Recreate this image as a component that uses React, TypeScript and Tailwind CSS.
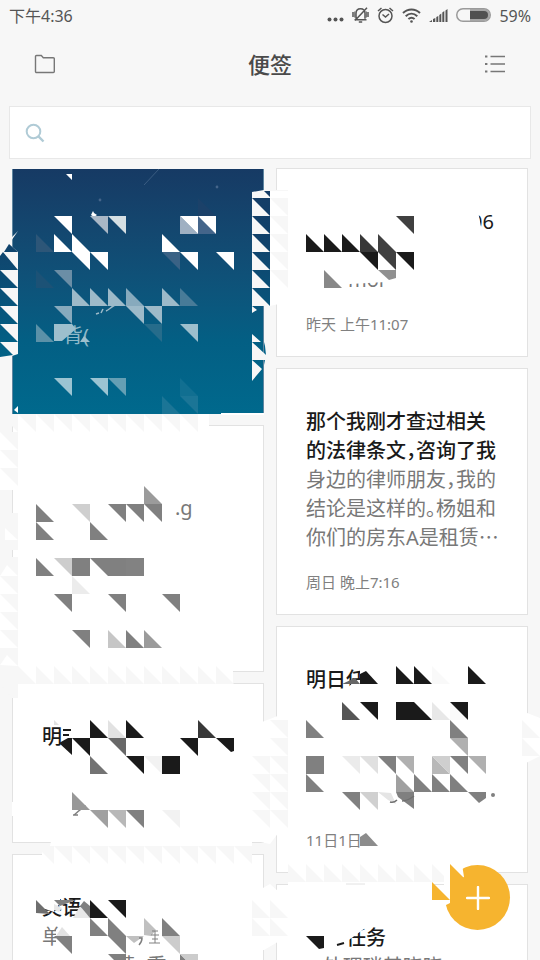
import { useState } from "react";

const BLACK = "#1a1a1a";
const GRAY = "#808080";
const PAGE = "#f7f7f7";
const CELL = 18;

type Side = "L" | "U" | "F";
type Tile = [number, number, Side, string];

// column, row, half of the cell (lower left, upper right, full), color
const tiles: Tile[] = [
  // blue note
  [11, 11, "L", "#1b4169"],
  [3, 12, "U", "#fff"], [5, 12, "U", "#a9b7c6"], [6, 12, "U", "#d5dfe3"],
  [10, 12, "L", "#9fb0c2"], [10, 12, "U", "#fff"], [11, 12, "L", "#44658a"], [11, 12, "U", "#fff"],
  [2, 13, "L", "#2d5678"], [3, 13, "L", "#fff"], [4, 13, "L", "#fff"], [9, 13, "L", "#fff"],
  [4, 14, "U", "#fff"], [5, 14, "U", "#fff"], [9, 14, "U", "#3a6285"], [10, 14, "U", "#fff"], [12, 14, "U", "#fff"],
  [2, 15, "L", "#1c5276"], [3, 15, "U", "#6b8ea6"],
  [4, 16, "L", "#9dbac9"], [5, 16, "L", "#9dbac9"], [6, 16, "L", "#9dbac9"], [7, 16, "L", "#87aabd"],
  [9, 16, "L", "#9dbac9"], [10, 16, "L", "#487b98"],
  [3, 17, "U", "#87aabd"], [7, 17, "U", "#9dbac9"], [8, 17, "U", "#9dbac9"],
  [2, 18, "L", "#5b91a8"], [8, 18, "U", "#266c8b"], [10, 18, "U", "#9dbfcd"],
  [3, 21, "U", "#9bc4d2"], [5, 21, "U", "#9bc4d2"], [6, 21, "U", "#659fb4"], [10, 21, "L", "#116f91"],
  [9, 22, "L", "#1b7596"], [10, 22, "U", "#1b7596"],

  // second note
  [8, 27, "L", "#9b9b9b"],
  [2, 28, "L", GRAY], [4, 28, "U", "#cfcfcf"], [6, 28, "U", GRAY], [7, 28, "U", GRAY], [8, 28, "U", GRAY],
  [2, 29, "L", GRAY], [5, 29, "L", GRAY],
  [2, 31, "L", GRAY], [3, 31, "U", "#cdcdcd"], [4, 31, "F", GRAY], [5, 31, "U", GRAY], [6, 31, "F", GRAY], [7, 31, "F", "#828282"],
  [4, 32, "L", "#ececec"],
  [3, 33, "U", GRAY], [6, 33, "U", GRAY], [9, 33, "U", GRAY],
  [4, 35, "U", GRAY], [6, 35, "L", "#c6c6c6"], [7, 35, "L", GRAY], [8, 35, "L", "#9b9b9b"],

  // third note
  [5, 40, "L", BLACK], [6, 40, "L", "#e2e2e2"], [7, 40, "L", BLACK], [11, 40, "L", "#383838"],
  [4, 41, "U", BLACK], [6, 41, "U", "#686868"], [10, 41, "U", BLACK],
  [5, 42, "L", "#737373"], [7, 42, "U", BLACK], [8, 42, "U", "#f2f2f2"], [9, 42, "F", BLACK],
  [4, 44, "L", "#989898"],
  [5, 45, "U", "#a0a0a0"], [6, 45, "U", "#b8b8b8"], [7, 45, "U", GRAY], [9, 45, "U", "#f2f2f2"],

  // fourth note
  [5, 50, "L", BLACK], [6, 50, "U", BLACK],
  [5, 51, "L", GRAY], [6, 51, "L", GRAY], [9, 51, "L", GRAY],
  [3, 52, "U", GRAY], [6, 52, "U", GRAY], [9, 52, "U", "#cccccc"],
  [6, 53, "U", GRAY], [10, 53, "L", GRAY], [10, 53, "U", "#cccccc"],

  // right column, first note
  [22, 12, "U", "#404040"],
  [17, 13, "L", BLACK], [18, 13, "L", BLACK], [19, 13, "L", BLACK], [20, 13, "L", "#383838"], [21, 13, "L", "#404040"],
  [20, 14, "U", BLACK], [21, 14, "U", "#404040"], [22, 14, "U", BLACK],
  [18, 15, "L", "#888888"],

  // right column, third note
  [22, 37, "L", BLACK], [23, 37, "L", BLACK], [24, 37, "L", "#f9f9f9"], [26, 37, "L", BLACK],
  [19, 39, "L", "#555555"], [20, 39, "U", BLACK], [22, 39, "F", BLACK], [23, 39, "L", BLACK],
  [24, 39, "L", "#e8e8e8"], [25, 39, "L", "#fafafa"], [25, 39, "U", BLACK],
  [17, 40, "L", GRAY], [25, 40, "L", GRAY], [25, 41, "U", "#b0b0b0"],
  [17, 42, "F", GRAY], [19, 42, "U", "#ebebeb"], [20, 42, "U", "#e0e0e0"], [21, 42, "U", GRAY], [22, 42, "U", "#b0b0b0"],
  [24, 42, "L", "#b8b8b8"], [24, 42, "U", "#cfcfcf"], [25, 42, "U", GRAY], [26, 42, "U", "#b0b0b0"],
  [17, 43, "L", GRAY], [22, 43, "L", "#a0a0a0"], [23, 43, "L", GRAY], [24, 43, "L", GRAY], [25, 43, "L", GRAY],
  [19, 44, "U", GRAY], [20, 44, "U", "#d0d0d0"],

  // around the add button
  [25, 48, "L", "#f6b42f"], [24, 49, "L", "#f6b42f"],
];

const tilePath = (col: number, row: number, side: Side) => {
  const x = col * CELL;
  const y = row * CELL;
  if (side === "L") return `M${x} ${y}v${CELL}h${CELL}z`;
  if (side === "U") return `M${x} ${y}h${CELL}v${CELL}z`;
  return `M${x} ${y}h${CELL}v${CELL}h-${CELL}z`;
};

// run of equal half cells, written as one path
const run = (c1: number, c2: number, r1: number, r2: number, side: Side) => {
  let d = "";
  for (let r = r1; r <= r2; r++) {
    for (let c = c1; c <= c2; c++) d += tilePath(c, r, side);
  }
  return d;
};

const Mosaic = () => (
  <svg className="pointer-events-none absolute left-0 top-0" width="540" height="960" viewBox="0 0 540 960" aria-hidden="true">
    <defs>
      <linearGradient id="sea" gradientUnits="userSpaceOnUse" x1="0" y1="169" x2="0" y2="413">
        <stop offset="0" stopColor="#163a64" />
        <stop offset="0.3" stopColor="#11426b" />
        <stop offset="0.7" stopColor="#035f84" />
        <stop offset="1" stopColor="#00698d" />
      </linearGradient>
    </defs>

    {/* Night sky details */}
    <path d="M144 185l15-16" stroke="#3a5c82" strokeWidth="1" />
    <circle cx="100" cy="200" r="1.4" fill="#45658a" />
    <circle cx="217" cy="187" r="1.4" fill="#45658a" />
    <path d="M66 174h6v6zM91 215l2-4 1 2 3 2-3 2z" fill="#fff" />

    {/* Edges of the blue note */}
    <path d="M18 231L9 244 18 252V354L12 356V237z" fill={PAGE} />
    <path d="M4 252L9 244 18 252z" fill="url(#sea)" />
    <path d="M0 256v14h18L3 252z" fill="url(#sea)" />
    <path d={run(0, 0, 15, 18, "L")} fill="url(#sea)" />
    <path d="M0 342L13 355 0 357z" fill="url(#sea)" />
    <path d="M14 410l4-4v7z" fill="#fff" />
    <path d="M252 192L264 190H288V300L270 306H252z" fill={PAGE} />
    <path d="M270 191H288V302L270 306z" fill="#fff" />
    <path d={run(15, 15, 11, 15, "U")} fill={PAGE} />
    <path d="M264 191h6v6z" fill="url(#sea)" />
    <path d={run(14, 14, 11, 16, "U")} fill="url(#sea)" />
    <path d="M252 306l5 4-5 3zM252 334l9 8h-9zM252 342l13 12v6h-13zM252 360l10 9-10 12z" fill={PAGE} />
    <path d="M264 346v-4l1 4 1 9-2-2zM264 360h1l-1 5z" fill="#03648a" />
    <path d="M221 413H264V415H221z" fill="#fff" />

    {/* Edges of the white notes */}
    <path d="M0 432H18V414H209V432H18V490H0z" fill="#fff" />
    <path d={run(1, 10, 23, 23, "U") + run(0, 0, 23, 26, "U")} fill={PAGE} />
    <path d="M8 513h10v37H8zM8 557h10v76H8zM8 645h10v27H8z" fill={PAGE} />
    <path d="M0 576l7-11 11 11v72H0zM5 528l13 12h-13zM0 665l7-10 11 11z" fill="#fff" />
    <path d={run(0, 0, 32, 35, "U")} fill={PAGE} />
    <path d="M18 666H233V684H18z" fill="#fff" />
    <path d={run(1, 12, 37, 37, "L")} fill={PAGE} />
    <path d="M18 684H234V700H18zM12 802h6v14h-6zM52 836H252V846H50z" fill="#fff" />
    <path d="M0 684V666H18V698H12z" fill={PAGE} />
    <path d="M42 854V846H252V868H42z" fill="#fff" />
    <path d={run(2, 13, 47, 47, "U")} fill={PAGE} />
    <path d="M252 700L262 722 288 712V820L270 842V770L252 780z" fill="#fff" />
    <path d="M252 768H288V820L270 844 252 840z" fill="#fff" />
    <path d={run(14, 15, 42, 45, "U") + run(15, 15, 40, 41, "U")} fill={PAGE} />
    <path d="M252 894L270 884 288 900V936L264 950H252z" fill="#fff" />
    <path d={run(14, 15, 50, 51, "L")} fill={PAGE} />
    <path d="M522 711L540 718V756L522 765z" fill="#fff" />
    <path d={run(29, 29, 40, 41, "L")} fill={PAGE} />
    <path d="M288 864H450V884H288z" fill="#fff" />
    <path d={run(16, 24, 48, 48, "L")} fill={PAGE} />
    <path d="M288 882H432V896H288z" fill="#fff" />
    <path d="M346 884h19" stroke="#e2e2e2" />

    {/* Covered words */}
    <path d="M464 206H477L482 232H464z" fill="#fff" />
    <path d="M340 262H400V281L386 282 350 284 340 290z" fill="#fff" />
    <path d="M62 724H101V750H72V744H62z" fill="#fff" />
    <path d="M63 730h8M63 735h6" stroke={BLACK} strokeWidth="2" />
    <path d="M360 666H384V690H345L356 680H360z" fill="#fff" />
    <path d="M300 926H368L346 942V952H300z" fill="#fff" />
    <path d="M337 945l7-2" stroke={BLACK} strokeWidth="2" />
    <path d="M36 894H60V904L54 909V912L36 906z" fill="#fff" />
    <path d="M56 930l8-4v20h-8z" fill="#fff" />

    {/* Cut tiles */}
    <path d="M59 743L68 738H72V755z" fill={BLACK} />
    <path d="M54 720l5 5h-5z" fill="#e2e2e2" />
    <path d="M216 738H234V751L231 752z" fill={BLACK} />
    <path d="M36 900L50 914 36 913z" fill="#6e6e6e" />
    <path d="M54 900H76L60 906z" fill={GRAY} />
    <path d="M54 904l8 4-3 4-5-2zM73 918L80 906 90 918z" fill="#e8e8e8" />
    <path d="M80 906L84 901 90 906V918z" fill={GRAY} />
    <path d="M56 936l6-9 8 9z" fill="#e2e2e2" />
    <path d="M126 936H144L134 943z" fill="#c0c0c0" />
    <path d="M139 938h3c0 3-1 5-3 7" stroke={GRAY} strokeWidth="1.5" fill="none" />
    <path d="M144 918L156 930 151 936 144 935z" fill="#c0c0c0" />
    <path d="M152 931h6M151 935h8M152 939h6M149 943h11M155 931v12" stroke={GRAY} strokeWidth="1" />
    <path d="M378 270H396V278L389 280z" fill="#909090" />
    <path d="M342 684L355 678 360 684z" fill="#666666" />
    <path d="M360 674L366 671 378 684H360z" fill={BLACK} />
    <path d="M378 792L391 793 396 804 388 800z" fill="#e5e5e5" />
    <path d="M396 792H414V809L406 803 398 797z" fill={GRAY} />
    <path d="M402 801c5 0 8-2 12-5M390 802c3 1 5 0 7-2" stroke="#707070" strokeWidth="1.5" fill="none" />
    <path d="M468 792H486V798L479 803z" fill={GRAY} />
    <circle cx="493" cy="795" r="2" fill={GRAY} />
    <path d="M360 830H364V850H360z" fill="#fff" />
    <path d="M360 846V837L366 833 378 846z" fill="#8c8c8c" />
    <path d="M306 936H324V948L319 949z" fill={BLACK} />
    <path d="M54 324H72L76 329 62 341H54z" fill="#9dbfcd" />
    <path d="M80 342L84 336 90 342z" fill="#9dbfcd" />
    <path d="M96 314l3-1M101 313l2-4M106 311c3-1 5-4 9-6" stroke="#9dbac9" strokeWidth="1.5" />
    <path d="M74 815c5-4 7-7 12-9M73 815h5" stroke={GRAY} strokeWidth="1.5" fill="none" />

    {/* Corner hidden behind the button */}
    <path d="M444 864H462L464 877 455 882H450V903L444 906z" fill="#fff" />
    {tiles.map(([col, row, side, color], i) => (
      <path key={i} d={tilePath(col, row, side)} fill={color} />
    ))}
  </svg>
);

type Line = { text: string; strong?: boolean; className?: string };

const Note = ({ lines, date }: { lines: Line[]; date?: string }) => (
  <article className="border border-[#e2e2e2] bg-white pb-[22px] pl-[29px] pr-4 pt-[38px]">
    {lines.map((line, i) => (
      <p
        key={i}
        className={`h-[29px] whitespace-nowrap text-[20px] leading-[29px] ${
          line.strong ? "font-medium text-[#1a1a1a]" : "text-[#787878]"
        } ${line.className ?? ""}`}
      >
        {line.text}
      </p>
    ))}
    <p className="mt-5 h-5 text-[15px] leading-5 text-[#808080]">{date}</p>
  </article>
);

const StatusBar = () => (
  <div className="flex h-8 items-center justify-between px-[9px] text-[16px] leading-5 text-[#555]">
    <span>下午4:36</span>
    <div className="flex items-center gap-2">
      <svg width="17" height="18" viewBox="0 0 17 18" fill="currentColor">
        <circle cx="2.5" cy="12.5" r="2" />
        <circle cx="8.5" cy="12.5" r="2" />
        <circle cx="14.5" cy="12.5" r="2" />
      </svg>
      <svg width="17" height="18" viewBox="0 0 17 18" fill="none" stroke="currentColor" strokeWidth="1.5">
        <path d="M4 11.8V6.500c0-3 2-4.800 4.500-4.800S13 3.500 13 6.500v5.300M2.500 12.800h12M15 .8L3 13.600M6.800 15h3.400M1 5v5M16 5v5" />
        <path d="M2.800 4.500v6M14.300 4.500v6" strokeWidth="1" />
      </svg>
      <svg width="17" height="18" viewBox="0 0 17 18" fill="none" stroke="currentColor" strokeWidth="1.5">
        <circle cx="8.5" cy="9" r="6.500" />
        <path d="M5.500 7.500l3 2.500L12 7M1 4L4.500 1M16 4l-3.500-3" />
      </svg>
      <svg width="19" height="18" viewBox="0 0 19 18" fill="none" stroke="currentColor" strokeWidth="2">
        <path d="M1 6c5-4.800 12-4.800 17 0M3.700 9.200c3.500-3.400 8-3.400 11.600 0M6.400 12.100c2-1.800 4.200-1.800 6.200 0" />
        <circle cx="9.5" cy="14.500" r="1.3" fill="currentColor" stroke="none" />
      </svg>
      <svg width="19" height="18" viewBox="0 0 19 18" fill="currentColor">
        <path d="M0 15l3-2v2zM4 12l2.300-1v4H4zM7.300 10l2-1v6h-2zM10.300 8l2-1.500V15h-2zM13.300 5.500l2-1.500v11h-2zM16.500 3.500l2-1.500v13h-2z" />
      </svg>
      <svg width="35" height="16" viewBox="0 0 35 16">
        <rect x="0.75" y="0.75" width="33.5" height="12.5" rx="6.25" fill={PAGE} stroke="#9a9a9a" strokeWidth="1.5" />
        <path d="M14 1h14a6 6 0 0 1 0 12H14z" fill="#a5a5a5" />
        <path d="M14 3h14a4 4 0 0 1 0 8H14z" fill="#505050" />
      </svg>
      <span>59%</span>
    </div>
  </div>
);

const App = () => {
  const [query, setQuery] = useState("");

  return (
    <div className="relative h-screen overflow-hidden bg-[#f7f7f7] font-['Noto_Sans','Noto_Sans_CJK_SC',sans-serif]">
      <StatusBar />

      {/* Header */}
      <header className="flex h-16 items-center justify-between px-[33px]">
        <button type="button" aria-label="文件夹" className="flex size-6 items-center justify-center text-[#777]">
          <svg width="22" height="20" viewBox="0 0 22 20" fill="none" stroke="currentColor" strokeWidth="1.4">
            <path d="M1.500 2.500a1 1 0 0 1 1-1h4.800l2 2.200h10a1 1 0 0 1 1 1v12.800a1 1 0 0 1-1 1H2.500a1 1 0 0 1-1-1z" />
          </svg>
        </button>
        <h1 className="text-[22px] font-medium leading-7 text-[#4a4a4a]">便签</h1>
        <button type="button" aria-label="列表" className="flex size-6 items-center justify-center text-[#777]">
          <svg width="22" height="20" viewBox="0 0 22 20" fill="none" stroke="currentColor" strokeWidth="1.3">
            <path d="M6.500 2.500H21M6.500 10H21M6.500 17.500H21" />
            <path d="M1 2.500h2.400M1 10h2.400M1 17.500h2.400" strokeWidth="2.2" />
          </svg>
        </button>
      </header>

      {/* Search */}
      <label className="mx-[9px] mt-[10px] flex h-[53px] items-center border border-[#e8e8e8] bg-white px-[15px]">
        <svg width="20" height="20" viewBox="0 0 20 20" fill="none" stroke="#b0cbd6" strokeWidth="2">
          <circle cx="8.5" cy="8.5" r="6.8" />
          <path d="M13.200 13.200L18.500 18.500" strokeWidth="2.4" />
        </svg>
        <input
          type="text"
          aria-label="搜索便签"
          value={query}
          onChange={(e) => setQuery(e.target.value)}
          className="ml-3 min-w-0 flex-1 bg-transparent text-[16px] outline-none"
        />
      </label>

      {/* Notes */}
      <main className="mt-[9px] grid grid-cols-2 items-start gap-3 px-3">
        <div className="flex flex-col gap-[11px]">
          <article className="mt-px h-[245px] border-x border-[#5f86a0] bg-linear-to-b from-[#163a64] from-0% via-[#035f84] via-70% to-[#00698d] pl-[50px] pt-[152px]">
            <p className="text-[20px] leading-[29px] text-[#8fb8c8]">背(</p>
          </article>
          <Note
            lines={[
              { text: "" },
              { text: ".g", className: "pl-[133px]" },
              { text: "" },
              { text: "" },
              { text: "" },
            ]}
          />
          <Note lines={[{ text: "明天", strong: true }, { text: "" }]} />
          <Note
            lines={[
              { text: "英语", strong: true },
              { text: "单" },
              { text: "读  重", className: "whitespace-pre pl-[74px]" },
            ]}
          />
        </div>
        <div className="flex flex-col gap-[11px]">
          <Note
            lines={[
              { text: "06", className: "pl-[165px] text-[#1a1a1a]!" },
              { text: "" },
              { text: "mor", className: "pl-[42px]" },
            ]}
            date="昨天 上午11:07"
          />
          <Note
            lines={[
              { text: "那个我刚才查过相关", strong: true },
              { text: "的法律条文，咨询了我", strong: true, className: "[font-feature-settings:'halt']" },
              { text: "身边的律师朋友，我的", className: "[font-feature-settings:'halt']" },
              { text: "结论是这样的。杨姐和", className: "[font-feature-settings:'halt']" },
              { text: "你们的房东A是租赁⋯" },
            ]}
            date="周日 晚上7:16"
          />
          <Note
            lines={[
              { text: "明日任", strong: true },
              { text: "" },
              { text: "" },
              { text: "" },
              { text: "" },
            ]}
            date="11日1日"
          />
          <Note
            lines={[
              { text: "明日任务", strong: true },
              { text: "1.处理琐基晓晓" },
            ]}
          />
        </div>
      </main>

      {/* Add button */}
      <button
        type="button"
        aria-label="新建便签"
        className="absolute bottom-[30px] right-[30px] flex size-[65px] items-center justify-center rounded-full bg-[#f6b42f]"
      >
        <svg width="24" height="24" viewBox="0 0 24 24" stroke="#fff" strokeWidth="2.4" strokeLinecap="round">
          <path d="M12 1v22M1 12h22" />
        </svg>
      </button>

      <Mosaic />
    </div>
  );
};

export default App;
